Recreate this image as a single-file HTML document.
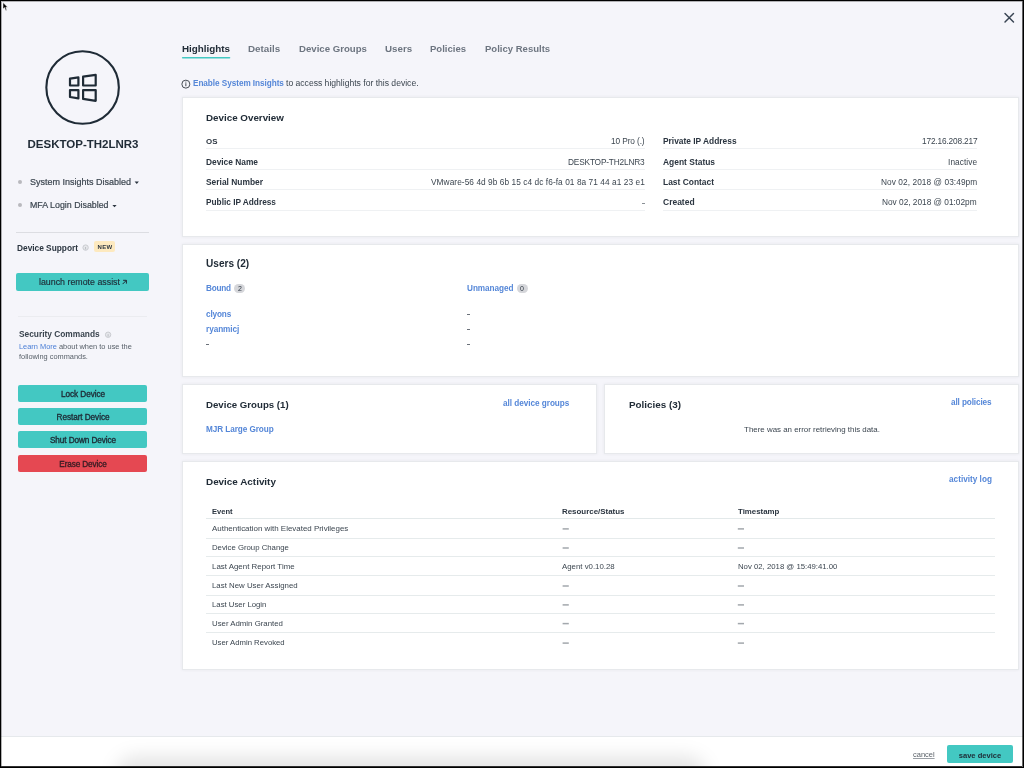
<!DOCTYPE html>
<html><head><meta charset="utf-8"><title>Device</title>
<style>
html,body{margin:0;padding:0;}
body{width:1024px;height:768px;overflow:hidden;position:relative;background:#f5f5fa;font-family:"Liberation Sans", sans-serif;}
.t{position:absolute;white-space:nowrap;will-change:transform;}
</style></head><body>
<svg style="position:absolute;left:0;top:0" width="170" height="130" viewBox="0 0 170 130">
<circle cx="82.6" cy="87.5" r="36.25" fill="none" stroke="#1f2b36" stroke-width="2.1"/>
<g fill="none" stroke="#1f2b36" stroke-width="2.2" stroke-linejoin="round">
<path d="M70 78.6 L78.4 77.4 L78.4 85.5 L70 85.5 Z"/>
<path d="M83.1 76.7 L95.7 74.8 L95.7 85.5 L83.1 85.5 Z"/>
<path d="M70 90.1 L78.4 90.1 L78.4 98.4 L70 97 Z"/>
<path d="M83.1 90.1 L95.7 90.1 L95.7 100.8 L83.1 98.9 Z"/>
</g></svg>
<div class="t" style="left:-217.40px;width:600px;text-align:center;top:139.00px;font-size:11.5px;line-height:11.5px;font-weight:bold;color:#212c37;">DESKTOP-TH2LNR3</div>
<div style="position:absolute;left:18.2px;top:180px;width:4px;height:4px;border-radius:50%;background:#b9b9bd"></div>
<div style="position:absolute;left:18.2px;top:203.4px;width:4px;height:4px;border-radius:50%;background:#b9b9bd"></div>
<div class="t" style="left:30.20px;top:178.00px;font-size:9.0px;line-height:9.0px;color:#3c4650;-webkit-text-stroke:0.2px #3c4650;">System Insights Disabled</div>
<div class="t" style="left:30.20px;top:201.00px;font-size:8.83px;line-height:8.83px;color:#3c4650;-webkit-text-stroke:0.2px #3c4650;">MFA Login Disabled</div>
<svg style="position:absolute;left:0;top:170px" width="150" height="50"><path d="M134.6 11.6 L138.9 11.6 L136.75 13.9 Z" fill="#2b3540"/><path d="M112.4 35 L116.6 35 L114.5 37.3 Z" fill="#2b3540"/></svg>
<div style="position:absolute;left:16px;top:232px;width:133px;height:1px;background:#dcdde2"></div>
<div class="t" style="left:16.60px;top:244.00px;font-size:8.32px;line-height:8.32px;font-weight:bold;color:#2b3540;">Device Support</div>
<svg style="position:absolute;left:82px;top:244px" width="8" height="8"><circle cx="3.6" cy="3.6" r="2.7" fill="#e6e7eb" stroke="#c9cbd0" stroke-width="1"/><rect x="3.15" y="3" width="0.9" height="2.4" fill="#b8bbc1"/></svg>
<div style="position:absolute;left:93.8px;top:241.3px;width:20.900000000000006px;height:10.5px;background:#fde9bf;border-radius:2px"></div>
<div class="t" style="left:-194.80px;width:600px;text-align:center;top:244.00px;font-size:6px;line-height:6px;font-weight:bold;color:#2b3540;letter-spacing:0.35px;">NEW</div>
<div style="position:absolute;left:16.2px;top:273px;width:133.0px;height:18px;background:#43c8c2;border-radius:2px"></div>
<div class="t" style="left:39.00px;top:278.00px;font-size:8.83px;line-height:8.83px;color:#1e2b36;-webkit-text-stroke:0.15px #1e2b36;">launch remote assist</div>
<svg style="position:absolute;left:118px;top:277px" width="12" height="10"><path d="M4.6 7.1 L8.3 3.4 M5.1 3.3 L8.4 3.3 L8.4 6.6" fill="none" stroke="#1e2b36" stroke-width="1"/></svg>
<div style="position:absolute;left:18px;top:316px;width:129px;height:1px;background:#ebecf0"></div>
<div class="t" style="left:18.90px;top:330.00px;font-size:8.35px;line-height:8.35px;font-weight:bold;color:#3a444e;">Security Commands</div>
<svg style="position:absolute;left:104px;top:331px" width="8" height="8"><circle cx="4.1" cy="3.75" r="2.7" fill="#e6e7eb" stroke="#c9cbd0" stroke-width="1"/><rect x="3.65" y="3.15" width="0.9" height="2.4" fill="#b8bbc1"/></svg>
<div class="t" style="left:18.90px;top:343.00px;font-size:7.42px;line-height:7.42px;color:#59616a;"><span style="color:#4b7fd6">Learn More</span> about when to use the</div>
<div class="t" style="left:18.90px;top:353.00px;font-size:7.39px;line-height:7.39px;color:#59616a;">following commands.</div>
<div style="position:absolute;left:18px;top:385px;width:129px;height:17px;background:#43c8c2;border-radius:2px"></div>
<div class="t" style="left:-217.40px;width:600px;text-align:center;top:391.00px;font-size:8.2px;line-height:8.2px;letter-spacing:-0.060px;-webkit-text-stroke:0.35px #1e2b36;color:#1e2b36;">Lock Device</div>
<div style="position:absolute;left:18px;top:408px;width:129px;height:17px;background:#43c8c2;border-radius:2px"></div>
<div class="t" style="left:-217.40px;width:600px;text-align:center;top:414.00px;font-size:8.2px;line-height:8.2px;letter-spacing:-0.055px;-webkit-text-stroke:0.35px #1e2b36;color:#1e2b36;">Restart Device</div>
<div style="position:absolute;left:18px;top:431px;width:129px;height:17px;background:#43c8c2;border-radius:2px"></div>
<div class="t" style="left:-217.40px;width:600px;text-align:center;top:437.00px;font-size:8.2px;line-height:8.2px;letter-spacing:-0.072px;-webkit-text-stroke:0.35px #1e2b36;color:#1e2b36;">Shut Down Device</div>
<div style="position:absolute;left:18px;top:455px;width:129px;height:17px;background:#e54852;border-radius:2px"></div>
<div class="t" style="left:-217.40px;width:600px;text-align:center;top:461.00px;font-size:8.2px;line-height:8.2px;letter-spacing:-0.105px;-webkit-text-stroke:0.35px #3b1c24;color:#3b1c24;">Erase Device</div>
<div class="t" style="left:182.20px;top:44.00px;font-size:9.84px;line-height:9.84px;font-weight:bold;color:#212c37;">Highlights</div>
<div class="t" style="left:248.40px;top:44.00px;font-size:9.82px;line-height:9.82px;font-weight:bold;color:#6d7580;">Details</div>
<div class="t" style="left:299.00px;top:44.00px;font-size:9.63px;line-height:9.63px;font-weight:bold;color:#6d7580;">Device Groups</div>
<div class="t" style="left:384.80px;top:44.00px;font-size:9.78px;line-height:9.78px;font-weight:bold;color:#6d7580;">Users</div>
<div class="t" style="left:430.00px;top:44.00px;font-size:9.52px;line-height:9.52px;font-weight:bold;color:#6d7580;">Policies</div>
<div class="t" style="left:484.50px;top:44.00px;font-size:9.54px;line-height:9.54px;font-weight:bold;color:#6d7580;">Policy Results</div>
<svg style="position:absolute;left:0;top:0" width="300" height="70"><rect x="181.9" y="56.9" width="48.4" height="1.6" rx="0.8" fill="#43c8c2"/></svg>
<svg style="position:absolute;left:180px;top:78px" width="12" height="12"><circle cx="5.85" cy="6.15" r="4" fill="none" stroke="#454b52" stroke-width="1"/><rect x="5.35" y="5.2" width="1" height="3" fill="#454b52"/><rect x="5.35" y="3.6" width="1" height="1" fill="#454b52"/></svg>
<div class="t" style="left:192.70px;top:80.00px;font-size:8.2px;line-height:8.2px;font-weight:bold;letter-spacing:-0.048px;color:#5587d8;">Enable System Insights</div>
<div class="t" style="left:286.20px;top:79.00px;font-size:8.58px;line-height:8.58px;color:#3c4650;">to access highlights for this device.</div>
<div style="position:absolute;left:182px;top:97px;width:837px;height:140px;background:#fff;border:1px solid #e7e9ec;box-shadow:0 0 3px rgba(40,50,70,0.07);box-sizing:border-box;"></div>
<div style="position:absolute;left:182px;top:244px;width:837px;height:133px;background:#fff;border:1px solid #e7e9ec;box-shadow:0 0 3px rgba(40,50,70,0.07);box-sizing:border-box;"></div>
<div style="position:absolute;left:182px;top:384px;width:415px;height:70px;background:#fff;border:1px solid #e7e9ec;box-shadow:0 0 3px rgba(40,50,70,0.07);box-sizing:border-box;"></div>
<div style="position:absolute;left:604px;top:384px;width:415px;height:70px;background:#fff;border:1px solid #e7e9ec;box-shadow:0 0 3px rgba(40,50,70,0.07);box-sizing:border-box;"></div>
<div style="position:absolute;left:182px;top:461px;width:837px;height:209px;background:#fff;border:1px solid #e7e9ec;box-shadow:0 0 3px rgba(40,50,70,0.07);box-sizing:border-box;"></div>
<div class="t" style="left:206.30px;top:113.00px;font-size:9.81px;line-height:9.81px;font-weight:bold;color:#212c37;">Device Overview</div>
<div class="t" style="left:206.10px;top:138.00px;font-size:7.89px;line-height:7.89px;font-weight:bold;color:#2b3540;">OS</div>
<div class="t" style="right:379.40px;text-align:right;top:137.00px;font-size:8.3px;line-height:8.3px;letter-spacing:-0.110px;color:#3c4650;">10 Pro (.)</div>
<div style="position:absolute;left:206px;top:148px;width:439px;height:1px;background:#eff1f3"></div>
<div class="t" style="left:206.10px;top:158.00px;font-size:8.35px;line-height:8.35px;font-weight:bold;color:#2b3540;">Device Name</div>
<div class="t" style="right:379.40px;text-align:right;top:158.00px;font-size:8.3px;line-height:8.3px;letter-spacing:-0.179px;color:#3c4650;">DESKTOP-TH2LNR3</div>
<div style="position:absolute;left:206px;top:169px;width:439px;height:1px;background:#eff1f3"></div>
<div class="t" style="left:206.10px;top:178.00px;font-size:8.41px;line-height:8.41px;font-weight:bold;color:#2b3540;">Serial Number</div>
<div class="t" style="right:379.40px;text-align:right;top:178.00px;font-size:8.3px;line-height:8.3px;letter-spacing:0.066px;color:#3c4650;">VMware-56 4d 9b 6b 15 c4 dc f6-fa 01 8a 71 44 a1 23 e1</div>
<div style="position:absolute;left:206px;top:189px;width:439px;height:1px;background:#eff1f3"></div>
<div class="t" style="left:206.10px;top:198.00px;font-size:8.29px;line-height:8.29px;font-weight:bold;color:#2b3540;">Public IP Address</div>
<div style="position:absolute;left:642px;top:203px;width:2.5px;height:1px;background:#8a9096"></div>
<div style="position:absolute;left:206px;top:210px;width:439px;height:1px;background:#eff1f3"></div>
<div class="t" style="left:662.60px;top:137.00px;font-size:8.39px;line-height:8.39px;font-weight:bold;color:#2b3540;">Private IP Address</div>
<div class="t" style="right:47.00px;text-align:right;top:137.00px;font-size:8.3px;line-height:8.3px;letter-spacing:-0.164px;color:#3c4650;">172.16.208.217</div>
<div style="position:absolute;left:662.6px;top:148px;width:314.4px;height:1px;background:#eff1f3"></div>
<div class="t" style="left:662.60px;top:158.00px;font-size:8.45px;line-height:8.45px;font-weight:bold;color:#2b3540;">Agent Status</div>
<div class="t" style="right:47.00px;text-align:right;top:158.00px;font-size:8.3px;line-height:8.3px;letter-spacing:0.074px;color:#3c4650;">Inactive</div>
<div style="position:absolute;left:662.6px;top:169px;width:314.4px;height:1px;background:#eff1f3"></div>
<div class="t" style="left:662.60px;top:178.00px;font-size:8.44px;line-height:8.44px;font-weight:bold;color:#2b3540;">Last Contact</div>
<div class="t" style="right:47.00px;text-align:right;top:178.00px;font-size:8.3px;line-height:8.3px;letter-spacing:0.072px;color:#3c4650;">Nov 02, 2018 @ 03:49pm</div>
<div style="position:absolute;left:662.6px;top:189px;width:314.4px;height:1px;background:#eff1f3"></div>
<div class="t" style="left:662.60px;top:198.00px;font-size:8.49px;line-height:8.49px;font-weight:bold;color:#2b3540;">Created</div>
<div class="t" style="right:47.00px;text-align:right;top:198.00px;font-size:8.3px;line-height:8.3px;letter-spacing:-0.005px;color:#3c4650;">Nov 02, 2018 @ 01:02pm</div>
<div style="position:absolute;left:662.6px;top:210px;width:314.4px;height:1px;background:#eff1f3"></div>
<div class="t" style="left:206.20px;top:259.00px;font-size:10.09px;line-height:10.09px;font-weight:bold;color:#212c37;">Users (2)</div>
<div class="t" style="left:206.20px;top:285.00px;font-size:8.2px;line-height:8.2px;font-weight:bold;letter-spacing:-0.232px;color:#5587d8;">Bound</div>
<div style="position:absolute;left:234.3px;top:283.5px;width:11.199999999999989px;height:9.300000000000011px;background:#d5d6da;border-radius:5px"></div>
<div class="t" style="left:-60.10px;width:600px;text-align:center;top:285.00px;font-size:7px;line-height:7px;color:#2b3540;">2</div>
<div class="t" style="left:466.70px;top:285.00px;font-size:8.2px;line-height:8.2px;font-weight:bold;letter-spacing:-0.037px;color:#5587d8;">Unmanaged</div>
<div style="position:absolute;left:516.7px;top:283.9px;width:11.299999999999955px;height:9.0px;background:#d5d6da;border-radius:5px"></div>
<div class="t" style="left:222.30px;width:600px;text-align:center;top:285.00px;font-size:7px;line-height:7px;color:#2b3540;">0</div>
<div class="t" style="left:206.20px;top:311.00px;font-size:8.2px;line-height:8.2px;font-weight:bold;letter-spacing:-0.146px;color:#5587d8;">clyons</div>
<div class="t" style="left:206.20px;top:326.00px;font-size:8.2px;line-height:8.2px;font-weight:bold;letter-spacing:-0.054px;color:#5587d8;">ryanmicj</div>
<div style="position:absolute;left:206px;top:344px;width:3px;height:1px;background:#6a7079"></div>
<div style="position:absolute;left:467px;top:314px;width:3px;height:1px;background:#6a7079"></div>
<div style="position:absolute;left:467px;top:329px;width:3px;height:1px;background:#6a7079"></div>
<div style="position:absolute;left:467px;top:344px;width:3px;height:1px;background:#6a7079"></div>
<div class="t" style="left:206.10px;top:400.00px;font-size:9.66px;line-height:9.66px;font-weight:bold;color:#212c37;">Device Groups (1)</div>
<div class="t" style="right:454.50px;text-align:right;top:400.00px;font-size:8.2px;line-height:8.2px;font-weight:bold;letter-spacing:-0.035px;color:#5587d8;">all device groups</div>
<div class="t" style="left:206.10px;top:426.00px;font-size:8.2px;line-height:8.2px;font-weight:bold;letter-spacing:-0.073px;color:#5587d8;">MJR Large Group</div>
<div class="t" style="left:628.80px;top:400.00px;font-size:9.85px;line-height:9.85px;font-weight:bold;color:#212c37;">Policies (3)</div>
<div class="t" style="right:32.50px;text-align:right;top:399.00px;font-size:8.2px;line-height:8.2px;font-weight:bold;letter-spacing:-0.119px;color:#5587d8;">all policies</div>
<div class="t" style="left:511.60px;width:600px;text-align:center;top:426.00px;font-size:7.92px;line-height:7.92px;color:#3c4650;">There was an error retrieving this data.</div>
<div class="t" style="left:206.30px;top:477.00px;font-size:9.9px;line-height:9.9px;font-weight:bold;color:#212c37;">Device Activity</div>
<div class="t" style="right:32.00px;text-align:right;top:476.00px;font-size:8.2px;line-height:8.2px;font-weight:bold;letter-spacing:0.014px;color:#5587d8;">activity log</div>
<div class="t" style="left:211.90px;top:508.00px;font-size:7.56px;line-height:7.56px;font-weight:bold;color:#2b3540;">Event</div>
<div class="t" style="left:562.30px;top:508.00px;font-size:7.91px;line-height:7.91px;font-weight:bold;color:#2b3540;">Resource/Status</div>
<div class="t" style="left:737.80px;top:508.00px;font-size:7.87px;line-height:7.87px;font-weight:bold;color:#2b3540;">Timestamp</div>
<div style="position:absolute;left:206px;top:518px;width:789px;height:1px;background:#e3e9ea"></div>
<div class="t" style="left:211.90px;top:525.00px;font-size:7.95px;line-height:7.95px;color:#3c4650;">Authentication with Elevated Privileges</div>
<div class="t" style="left:211.90px;top:544.00px;font-size:7.78px;line-height:7.78px;color:#3c4650;">Device Group Change</div>
<div class="t" style="left:211.90px;top:563.00px;font-size:7.91px;line-height:7.91px;color:#3c4650;">Last Agent Report Time</div>
<div class="t" style="left:562.30px;top:563.00px;font-size:7.83px;line-height:7.83px;color:#3c4650;">Agent v0.10.28</div>
<div class="t" style="left:737.60px;top:563.00px;font-size:7.77px;line-height:7.77px;color:#3c4650;">Nov 02, 2018 @ 15:49:41.00</div>
<div class="t" style="left:211.90px;top:582.00px;font-size:7.86px;line-height:7.86px;color:#3c4650;">Last New User Assigned</div>
<div class="t" style="left:211.90px;top:601.00px;font-size:7.78px;line-height:7.78px;color:#3c4650;">Last User Login</div>
<div class="t" style="left:211.90px;top:620.00px;font-size:7.84px;line-height:7.84px;color:#3c4650;">User Admin Granted</div>
<div class="t" style="left:211.90px;top:639.00px;font-size:7.74px;line-height:7.74px;color:#3c4650;">User Admin Revoked</div>
<div style="position:absolute;left:206px;top:538px;width:789px;height:1px;background:#e6ebec"></div>
<div style="position:absolute;left:206px;top:556px;width:789px;height:1px;background:#e6ebec"></div>
<div style="position:absolute;left:206px;top:575px;width:789px;height:1px;background:#e6ebec"></div>
<div style="position:absolute;left:206px;top:595px;width:789px;height:1px;background:#e6ebec"></div>
<div style="position:absolute;left:206px;top:613px;width:789px;height:1px;background:#e6ebec"></div>
<div style="position:absolute;left:206px;top:632px;width:789px;height:1px;background:#e6ebec"></div>
<svg style="position:absolute;left:0;top:0" width="1024" height="768"><rect x="562.6" y="528.15" width="6.2" height="1.5" fill="#a3a8ad"/><rect x="737.8" y="528.15" width="6.2" height="1.5" fill="#a3a8ad"/><rect x="562.6" y="547.25" width="6.2" height="1.5" fill="#a3a8ad"/><rect x="737.8" y="547.25" width="6.2" height="1.5" fill="#a3a8ad"/><rect x="562.6" y="585.25" width="6.2" height="1.5" fill="#a3a8ad"/><rect x="737.8" y="585.25" width="6.2" height="1.5" fill="#a3a8ad"/><rect x="562.6" y="604.15" width="6.2" height="1.5" fill="#a3a8ad"/><rect x="737.8" y="604.15" width="6.2" height="1.5" fill="#a3a8ad"/><rect x="562.6" y="622.85" width="6.2" height="1.5" fill="#a3a8ad"/><rect x="737.8" y="622.85" width="6.2" height="1.5" fill="#a3a8ad"/><rect x="562.6" y="642.35" width="6.2" height="1.5" fill="#a3a8ad"/><rect x="737.8" y="642.35" width="6.2" height="1.5" fill="#a3a8ad"/></svg>
<div style="position:absolute;left:0px;top:736px;width:1024px;height:32px;background:#fff;border-top:1px solid #e6e9ec;box-sizing:border-box"></div>
<div style="position:absolute;left:0;top:737px;width:1024px;height:31px;overflow:hidden"><div style="position:absolute;left:116px;top:19px;width:590px;height:40px;border-radius:40px;background:rgba(0,0,0,0.1);filter:blur(9px)"></div></div>
<div class="t" style="left:913.30px;top:751.00px;font-size:7.47px;line-height:7.47px;color:#5a6168;text-decoration:underline;text-decoration-color:#9a9fa5;">cancel</div>
<div style="position:absolute;left:946.8px;top:745.3px;width:66.20000000000005px;height:17.700000000000045px;background:#43c8c2;border-radius:2px"></div>
<div class="t" style="left:679.90px;width:600px;text-align:center;top:752.00px;font-size:7.57px;line-height:7.57px;font-weight:bold;color:#1e2b36;">save device</div>
<svg style="position:absolute;left:1000px;top:9px" width="20" height="18"><path d="M5 4.55 L13.5 13.05 M13.5 4.55 L5 13.05" stroke="#3a4553" stroke-width="1.45" stroke-linecap="round"/></svg>
<svg style="position:absolute;left:0;top:0" width="14" height="14"><path d="M3 2.6 L3 9 L4.6 7.6 L5.7 10.6 L6.8 10.2 L5.8 7.2 L7.7 7.2 Z" fill="#000" stroke="#fff" stroke-width="0.5"/></svg>
<div style="position:absolute;left:0px;top:0px;width:1024px;height:1px;background:#000"></div>
<div style="position:absolute;left:1px;top:1px;width:1021px;height:1px;background:rgba(0,0,0,0.28)"></div>
<div style="position:absolute;left:0px;top:0px;width:1px;height:768px;background:#000"></div>
<div style="position:absolute;left:1px;top:2px;width:1px;height:764px;background:rgba(0,0,0,0.3)"></div>
<div style="position:absolute;left:1023px;top:0px;width:1px;height:768px;background:#000"></div>
<div style="position:absolute;left:1022px;top:0px;width:1px;height:768px;background:rgba(0,0,0,0.6)"></div>
<div style="position:absolute;left:0px;top:767px;width:1024px;height:1px;background:#000"></div>
<div style="position:absolute;left:0px;top:766px;width:1022px;height:1px;background:rgba(0,0,0,0.8)"></div>
</body></html>
